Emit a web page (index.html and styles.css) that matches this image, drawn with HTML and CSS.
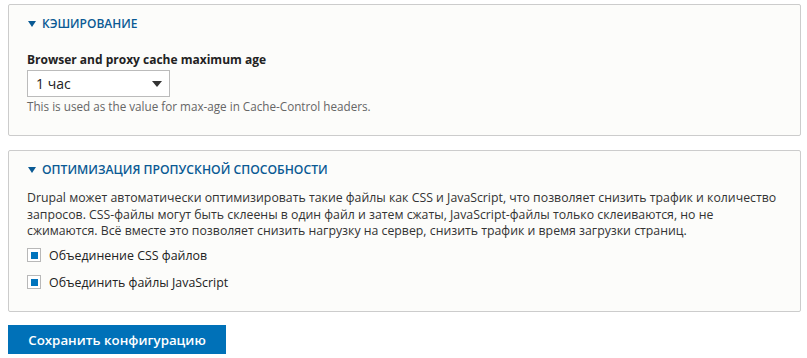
FILE: index.html
```html
<!DOCTYPE html>
<html lang="ru">
<head>
    <meta charset="UTF-8">
    <title>Производительность</title>
    <link rel="stylesheet" href="styles.css">
</head>
<body>
    <div class="page">
        <div class="panel panel-cache">
            <div class="legend"><span class="caret"></span>Кэширование</div>
            <label class="field-label" for="max_age">Browser and proxy cache maximum age</label>
            <div class="select">
                <span>1 час</span>
                <span class="select-arrow"></span>
            </div>
            <div class="description">This is used as the value for max-age in Cache-Control headers.</div>
        </div>

        <div class="panel panel-bandwidth">
            <div class="legend"><span class="caret"></span>Оптимизация пропускной способности</div>
            <p class="intro">Drupal может автоматически оптимизировать такие файлы как CSS и JavaScript, что позволяет снизить трафик и количество запросов. CSS-файлы могут быть склеены в один файл и затем сжаты, JavaScript-файлы только склеиваются, но не сжимаются. Всё вместе это позволяет снизить нагрузку на сервер, снизить трафик и время загрузки страниц.</p>
            <div class="checkbox">
                <span class="box"></span>
                <span>Объединение CSS файлов</span>
            </div>
            <div class="checkbox">
                <span class="box"></span>
                <span>Объединить файлы JavaScript</span>
            </div>
        </div>

        <button class="button-primary" type="submit">Сохранить конфигурацию</button>
    </div>
</body>
</html>
```

FILE: styles.css
```css
body {
    margin: 0;
    background-color: #fff;
    font-family: "Open Sans", "Liberation Sans", sans-serif;
    color: #222;
    font-size: 13px;
}
.page {
    width: 793px;
    padding: 4px 0 0 8px;
}
.panel {
    background-color: #fcfcfa;
    border: 1px solid #ccc;
    border-radius: 2px;
    padding: 9px 8px 0 18px;
    box-sizing: border-box;
}
.panel-cache {
    height: 132px;
}
.panel-bandwidth {
    height: 162px;
    margin-top: 14px;
}
.legend {
    display: flex;
    align-items: center;
    line-height: 20px;
    font-size: 12px;
    font-weight: 600;
    text-transform: uppercase;
    color: #0a5a94;
}
.panel-bandwidth .legend {
    font-size: 12.2px;
}
.caret {
    width: 0;
    height: 0;
    border-left: 4px solid transparent;
    border-right: 4px solid transparent;
    border-top: 6px solid #0a5a94;
    margin: 0 6px 0 1px;
}
.field-label {
    display: block;
    margin-top: 18px;
    font-size: 12px;
    font-weight: bold;
    line-height: 16px;
}
.select {
    display: flex;
    align-items: center;
    justify-content: space-between;
    width: 143px;
    height: 27px;
    box-sizing: border-box;
    margin-top: 2px;
    padding: 0 7px 0 8px;
    border: 1px solid #bbb;
    background-color: #fff;
    font-size: 14px;
}
.select-arrow {
    width: 0;
    height: 0;
    border-left: 5px solid transparent;
    border-right: 5px solid transparent;
    border-top: 6px solid #333;
}
.description {
    margin-top: 1px;
    font-size: 11.7px;
    line-height: 16px;
    color: #666;
}
.intro {
    max-width: 756px;
    margin: 10px 0 0;
    line-height: 16.5px;
    font-size: 12.3px;
    color: #333;
}
.checkbox {
    display: flex;
    align-items: center;
    gap: 8px;
    margin-top: 7px;
    line-height: 17px;
    font-size: 12.4px;
}
.checkbox + .checkbox {
    margin-top: 10px;
}
.box {
    width: 14px;
    height: 14px;
    box-sizing: border-box;
    border: 1px solid #b8b8b8;
    background-color: #fff;
    display: flex;
    align-items: center;
    justify-content: center;
}
.box::after {
    content: "";
    width: 7px;
    height: 7px;
    background-color: #0074bd;
}
.button-primary {
    display: block;
    margin-top: 13px;
    width: 218px;
    height: 29px;
    border: none;
    border-radius: 0;
    background-color: #0071b8;
    color: #fff;
    font-family: "Open Sans", "Liberation Sans", sans-serif;
    font-size: 13.3px;
    font-weight: 600;
    cursor: pointer;
}
```
